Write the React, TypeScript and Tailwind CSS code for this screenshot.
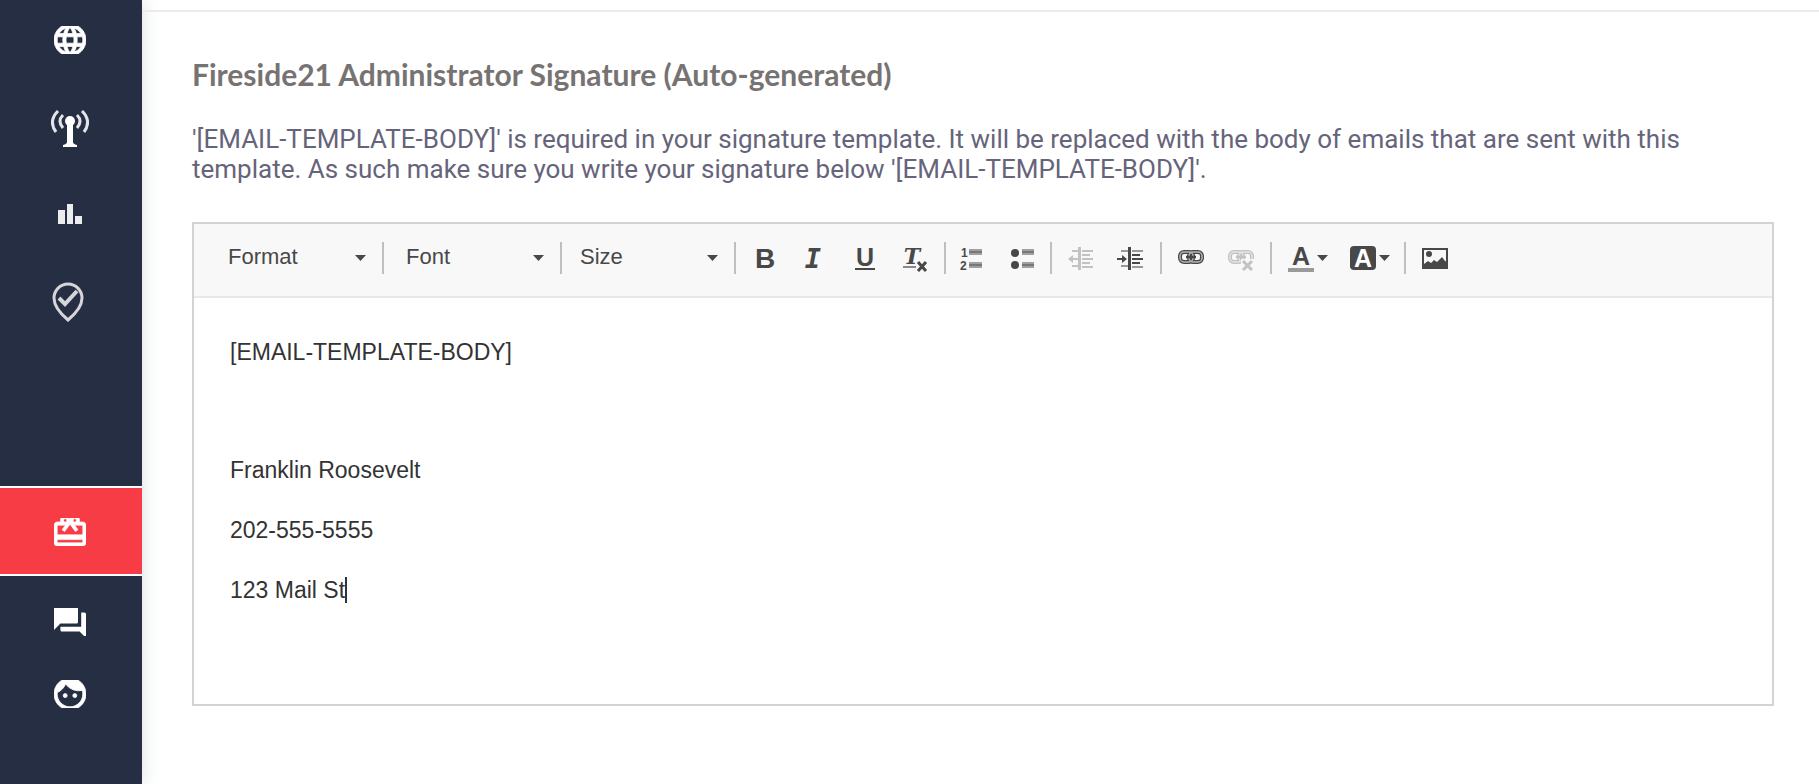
import type { ReactNode } from "react";
import { MdFace, MdForum, MdLanguage, MdRedeem } from "react-icons/md";

const FORMATS = ["Format", "Normal", "Heading 1", "Heading 2"];
const FONTS = ["Font", "Arial", "Georgia", "Verdana"];
const SIZES = ["Size", "8", "12", "16", "24"];

// sidebar glyphs are cropped a little at the top and bottom
const NAV_BOX = "2 3.25 20 17.5";

const Caret = () => (
  <svg className="w-[11px] h-[6px] shrink-0 pointer-events-none" viewBox="0 0 11 6" fill="#484848" aria-hidden="true">
    <path d="M0 0h11L5.5 6z" />
  </svg>
);

const Separator = () => <span className="w-0.5 h-8 shrink-0 bg-[#bfbfbf]" />;

const Combo = ({ label, options }: { label: string; options: string[] }) => (
  <label className="flex items-center h-8 w-[138px] mr-4">
    <select
      aria-label={label}
      className="appearance-none flex-1 min-w-0 h-[30px] self-start bg-transparent text-[22px] leading-[30px] text-[#484848] outline-none"
    >
      {options.map((o) => (
        <option key={o}>{o}</option>
      ))}
    </select>
    <Caret />
  </label>
);

const Tool = ({
  name,
  width = "w-[50px]",
  disabled = false,
  children,
}: {
  name: string;
  width?: string;
  disabled?: boolean;
  children: ReactNode;
}) => (
  <button
    type="button"
    aria-label={name}
    disabled={disabled}
    className={`flex items-center justify-center h-8 shrink-0 ${width} ${disabled ? "opacity-30" : ""}`}
  >
    <svg className="w-7 h-7 overflow-visible" viewBox="0 0 28 28" fill="#484848" aria-hidden="true">
      {children}
    </svg>
  </button>
);

const ColorTool = ({ name, children }: { name: string; children: ReactNode }) => (
  <button type="button" aria-label={name} className="flex items-center gap-0.5 h-8 w-[62px] pl-[11px] shrink-0">
    <svg className="w-7 h-7 shrink-0 overflow-visible" viewBox="0 0 28 28" fill="#484848" aria-hidden="true">
      {children}
    </svg>
    <Caret />
  </button>
);

const LinkShape = () => (
  <g fill="none" stroke="#484848">
    <rect x="3" y="8" width="13" height="10" rx="4" strokeWidth="4" />
    <rect x="12" y="8" width="13" height="10" rx="4" strokeWidth="4" />
    <rect x="3" y="8" width="13" height="10" rx="4" strokeWidth="1.5" stroke="#b5b5b5" />
    <rect x="12" y="8" width="13" height="10" rx="4" strokeWidth="1.5" stroke="#b5b5b5" />
    <path d="M9 13h10" strokeWidth="2.5" />
  </g>
);

const Toolbar = () => (
  <div
    role="toolbar"
    aria-label="Editor toolbar"
    className="flex flex-wrap pt-[18px] pb-[22px] pl-[34px] bg-[#f8f8f8] border-b-2 border-[#e8e8e8]"
  >
    <Combo label="Format" options={FORMATS} />
    <Separator />
    <div className="flex pl-[22px]">
      <Combo label="Font" options={FONTS} />
    </div>
    <Separator />
    <div className="flex pl-[18px]">
      <Combo label="Size" options={SIZES} />
    </div>
    <Separator />
    <div className="flex px-1">
      <Tool name="Bold">
        <text x="14" y="24" textAnchor="middle" className="font-['Liberation_Sans',sans-serif] font-bold text-[28px]">
          B
        </text>
      </Tool>
      <Tool name="Italic">
        <text x="12" y="24" textAnchor="middle" className="font-['DejaVu_Sans_Mono',monospace] font-bold italic text-[27px]">
          I
        </text>
      </Tool>
      <Tool name="Underline">
        <text x="14" y="22" textAnchor="middle" className="font-['Liberation_Sans',sans-serif] font-bold text-[25px]">
          U
        </text>
        <path d="M4 24h20v2H4z" />
      </Tool>
      <Tool name="Remove format">
        <text x="11" y="20" textAnchor="middle" className="font-['DejaVu_Serif',serif] font-bold italic text-[22px]">
          T
        </text>
        <path d="M2 22h13v2H2z" fill="#8a8a8a" />
        <path d="M17 18l8 9M25 18l-8 9" stroke="#484848" strokeWidth="3" />
      </Tool>
    </div>
    <Separator />
    <div className="flex px-1">
      <Tool name="Numbered list" width="w-12">
        <g className="font-['Liberation_Sans',sans-serif] font-bold text-[12px]">
          <text x="1" y="13">1</text>
          <text x="0" y="26">2</text>
        </g>
        <path d="M9 5h13v2H9zM9 9h13v2H9zM9 18h13v2H9zM9 22h13v2H9z" fill="#a0a0a0" />
        <path d="M9 7h13v2H9zM9 20h13v2H9z" fill="#777" />
      </Tool>
      <Tool name="Bulleted list" width="w-12">
        <circle cx="7" cy="9" r="4" />
        <circle cx="7" cy="21" r="4" />
        <path d="M14 5h12v2H14zM14 9h12v2H14zM14 18h12v2H14zM14 22h12v2H14z" fill="#a0a0a0" />
        <path d="M14 7h12v2H14zM14 20h12v2H14z" fill="#777" />
      </Tool>
    </div>
    <Separator />
    <div className="flex px-1">
      <Tool name="Decrease indent" disabled>
        <path d="M11 3h3v23h-3z" />
        <path d="M1 15l5-4v3h5v2H6v3z" />
        <path d="M5 6h6v2H5zM5 21h6v2H5zM15 6h11v2H15zM15 10h8v2h-8zM15 14h11v2H15zM15 18h8v2h-8zM15 22h11v2H15z" />
      </Tool>
      <Tool name="Increase indent">
        <path d="M11 3h3v23h-3z" />
        <path d="M10 15l-5-4v3H0v2h5v3z" />
        <path d="M4 6h7v2H4zM4 21h7v2H4zM15 6h11v2H15zM15 22h11v2H15z" fill="#999" />
        <path d="M15 10h8v2h-8zM15 14h11v2H15zM15 18h8v2h-8z" />
      </Tool>
    </div>
    <Separator />
    <div className="flex px-1">
      <Tool name="Link">
        <LinkShape />
      </Tool>
      <Tool name="Unlink" disabled>
        <LinkShape />
        <path d="M14 15h14v13H14z" fill="#f8f8f8" />
        <path d="M16 17l9 9M25 17l-9 9" stroke="#484848" strokeWidth="3" />
      </Tool>
    </div>
    <Separator />
    <div className="flex px-1">
      <ColorTool name="Text color">
        <text x="14" y="21" textAnchor="middle" className="font-['Liberation_Sans',sans-serif] font-bold text-[25px]">
          A
        </text>
        <path d="M1 24h26v4H1z" fill="#9a9a9a" />
      </ColorTool>
      <ColorTool name="Background color">
        <rect x="1" y="2" width="26" height="24" rx="4" />
        <text x="14" y="23" textAnchor="middle" fill="#fff" className="font-['Liberation_Sans',sans-serif] font-bold text-[25px]">
          A
        </text>
      </ColorTool>
    </div>
    <Separator />
    <div className="flex px-1">
      <Tool name="Image">
        <path d="M1 4h26v21H1zM3 6v17h22V6z" fillRule="evenodd" />
        <circle cx="8" cy="10" r="3" />
        <path d="M3 24v-4l4-3 3 2 3-3 3 2 5-5 3 4 2 1v6z" />
      </Tool>
    </div>
  </div>
);

const Sidebar = () => (
  <nav className="w-[142px] shrink-0 bg-[#262e43] text-white shadow-[0_0_16px_rgba(60,90,110,0.2)]">
    <div className="flex flex-col items-center gap-14 pt-[26px] pr-0.5">
      <a href="#website" aria-label="Website">
        <MdLanguage className="w-8 h-7" viewBox={NAV_BOX} strokeWidth="0.5" />
      </a>
      <a href="#outreach" aria-label="Outreach">
        <svg className="w-[38px] h-[38px]" viewBox="0 0 38 38" fill="#fff" aria-hidden="true">
          <circle cx="19" cy="11" r="5" />
          <path d="M16 14h6v18q0 2 4 3v2H12v-2q4-1 4-3z" />
          <path
            d="M7 1Q-3 11 5 22M31 1Q41 11 33 22M12 5Q6 11 12 18M26 5Q32 11 26 18"
            fill="none"
            stroke="#e4e5e8"
            strokeWidth="3"
          />
        </svg>
      </a>
      <a href="#reports" aria-label="Reports">
        <svg className="w-6 h-[22px]" viewBox="0 0 24 22" fill="#ececef" aria-hidden="true">
          <path d="M0 6h7v14H0zM9 0h6v20H9zM17 12h7v8h-7z" />
        </svg>
      </a>
      <a href="#casework" aria-label="Casework">
        <svg className="w-9 h-10" viewBox="0 0 36 40" fill="none" stroke="#d6d6d8" strokeWidth="3" aria-hidden="true">
          <path d="M16 38C10 33 2 25 2 16a14 14 0 0 1 28 0C30 25 22 33 16 38z" />
          <path d="M7 16l6 6L25 9" strokeWidth="4" />
        </svg>
      </a>
    </div>
    <div className="flex items-center justify-center h-[90px] mt-[164px] pr-0.5 pt-0.5 bg-[#f83c45] border-y-2 border-white">
      <a href="#signatures" aria-label="Signatures">
        <MdRedeem className="w-8 h-7" viewBox="2 3.5 20 17.5" strokeWidth="0.4" />
      </a>
    </div>
    <div className="flex flex-col items-center gap-11 pt-8 pr-0.5">
      <a href="#messages" aria-label="Messages">
        <MdForum className="w-8 h-7" viewBox={NAV_BOX} />
      </a>
      <a href="#profile" aria-label="Profile">
        <MdFace className="w-8 h-7" viewBox={NAV_BOX} strokeWidth="0.5" />
      </a>
    </div>
  </nav>
);

export default function App() {
  return (
    <div className="flex min-h-screen bg-white font-['Liberation_Sans',Arial,sans-serif]">
      <Sidebar />
      <div className="flex-1 min-w-0 pt-2.5">
        <main className="border-t-2 border-[#ebebeb] pt-11 pl-[50px] pr-[45px]">
          <h1 className="font-['Lato',sans-serif] font-bold text-[30px] leading-9 text-[#767372]">
            Fireside21 Administrator Signature (Auto-generated)
          </h1>
          <p className="mt-8 max-w-[1520px] font-['Roboto',sans-serif] text-[26px] leading-[30px] text-[#66647a]">
            '[EMAIL-TEMPLATE-BODY]' is required in your signature template. It will be replaced with the body of emails
            that are sent with this template. As such make sure you write your signature below
            '[EMAIL-TEMPLATE-BODY]'.
          </p>
          <div className="mt-[38px] border-2 border-[#d3d3d3]">
            <Toolbar />
            <div
              role="textbox"
              aria-label="Signature"
              aria-multiline="true"
              contentEditable
              suppressContentEditableWarning
              className="min-h-[406px] px-9 pt-9 space-y-6 text-[23px] leading-9 text-[#333] outline-none"
            >
              <p>[EMAIL-TEMPLATE-BODY]</p>
              <p className="leading-[34px]">&nbsp;</p>
              <p>Franklin Roosevelt</p>
              <p>202-555-5555</p>
              <p className="flex items-center">
                123 Mail St
                <span className="w-0.5 h-[26px] bg-[#333]" />
              </p>
            </div>
          </div>
        </main>
      </div>
    </div>
  );
}
